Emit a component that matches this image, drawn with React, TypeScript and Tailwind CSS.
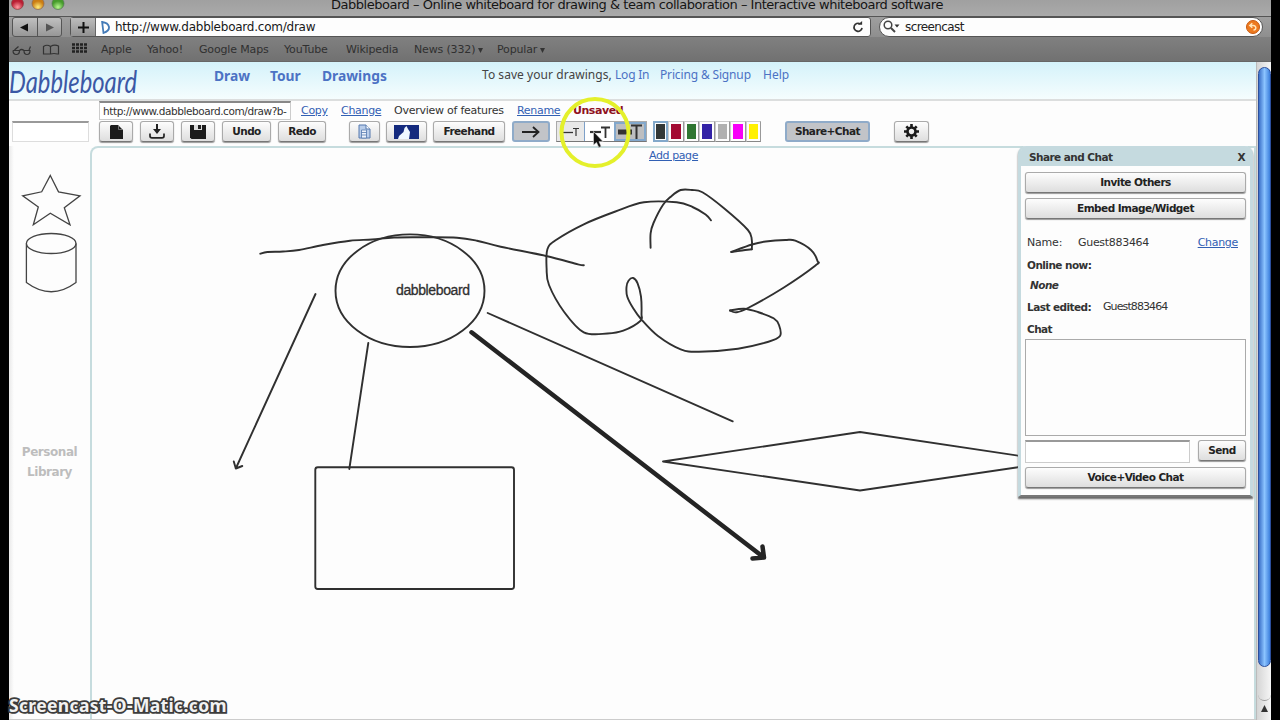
import type { ReactNode } from "react";
import clsx from "clsx";

type Point = [number, number];

// Catmull-Rom through the points, written out as cubic segments
function smooth(points: Point[]) {
    let d = `M${points[0][0]} ${points[0][1]}`;
    for (let i = 0; i < points.length - 1; i++) {
        const p0 = points[i - 1] || points[i];
        const p1 = points[i];
        const p2 = points[i + 1];
        const p3 = points[i + 2] || p2;
        const c1 = [p1[0] + (p2[0] - p0[0]) / 6, p1[1] + (p2[1] - p0[1]) / 6];
        const c2 = [p2[0] - (p3[0] - p1[0]) / 6, p2[1] - (p3[1] - p1[1]) / 6];
        d += `C${c1[0]} ${c1[1]} ${c2[0]} ${c2[1]} ${p2[0]} ${p2[1]}`;
    }
    return d;
}

const strokes: Point[][] = [
    [[260.3, 253.7], [267.4, 252], [283, 251.5], [299, 250], [323, 245], [350, 240.7], [372, 239.5], [394, 237.5], [425, 237.3], [457, 237.7], [477, 240.7], [500.7, 246.7], [546, 256], [578, 264.3], [583.8, 265.3]],
    [[711, 220.3], [705.6, 214.5], [692.5, 207], [676.7, 202.3], [643.9, 202.3], [615.4, 211.5], [583.8, 224.3], [556, 240], [547.4, 249.3], [546.6, 268.3], [549, 285], [564, 311.7], [583.8, 332.3], [607.5, 333.5], [623.3, 330.7], [640.3, 321], [641.5, 314], [641, 296.7], [637.6, 283.3], [633.2, 278], [628.5, 280.7], [626.5, 287], [627.3, 296.7], [633.2, 308.3], [641, 319], [658, 336], [680.7, 349.3], [699, 351.7], [738, 348.7], [767.6, 342], [780, 336], [779, 325], [773.6, 318.3], [757.8, 312], [744, 308.8], [730, 310.5]],
    [[730, 310.5], [736, 312.3], [748, 308], [783.5, 287.7], [815.5, 265.5], [817.5, 261], [811, 250], [795.3, 240.7], [785.4, 240], [765.7, 241.5], [752, 244.5], [731.3, 252]],
    [[731.3, 252], [742, 250.5], [751.8, 249.3]],
    [[751.8, 249.3], [751.8, 240], [747.9, 230], [724, 208.3], [702.4, 192.3], [692, 190], [680.7, 190], [670.8, 196.7], [662.9, 205], [653.5, 223], [650.6, 233.3], [650.6, 247.7]],
];

const bookmarks = [
    { label: "Apple", width: "w-[46px]" },
    { label: "Yahoo!", width: "w-[52px]" },
    { label: "Google Maps", width: "w-[85px]" },
    { label: "YouTube", width: "w-[62px]" },
    { label: "Wikipedia", width: "w-[68px]" },
    { label: "News (332)", width: "w-[83px]", menu: true },
    { label: "Popular", width: "w-[60px]", menu: true },
];

const swatches = ["bg-[#333837]", "bg-[#a30a32]", "bg-[#2f7631]", "bg-[#3322a6]", "bg-[#b0b0b0]", "bg-[#f800f8]", "bg-[#fff000]"];

const boldText = "text-[10.5px] font-bold tracking-[-0.55px]";
const toolButton = "flex h-[21px] shrink-0 items-center justify-center rounded-[3px] border border-[#aaa] border-b-[#777] bg-linear-to-b from-[#fdfdfd] to-[#dedede] text-[10.5px] font-bold tracking-[-0.55px] text-[#222] shadow-[0_1px_1px_#999]";
const activeButton = "flex h-[21px] shrink-0 items-center justify-center rounded-[3px] border-2 border-[#8fabc9] bg-[#c2c4c8] text-[10.5px] font-bold tracking-[-0.55px] text-[#222]";

function Link({ className, children }: { className?: string; children: ReactNode }) {
    return <a className={clsx("shrink-0 text-[#3260b4] underline underline-offset-1", className)}>{children}</a>;
}

function BrowserChrome() {
    return (
        <header className="h-[62px] bg-linear-to-b from-[#adadad] via-[#8e8e8e] via-60% to-[#707070] font-['DejaVu_Sans',sans-serif]">
            <div className="flex h-[17px] items-start border-b border-[#555] bg-linear-to-b from-[#a0a0a0] to-[#aaaaaa]">
                <svg className="h-[12px] w-[70px] shrink-0" viewBox="9 0 70 12">
                    <defs>
                        <radialGradient id="red" cy=".8"><stop stopColor="#ff9aa2" /><stop offset="1" stopColor="#b91e33" /></radialGradient>
                        <radialGradient id="amber" cy=".8"><stop stopColor="#ffed7a" /><stop offset="1" stopColor="#cb7d13" /></radialGradient>
                        <radialGradient id="green" cy=".8"><stop stopColor="#b8f990" /><stop offset="1" stopColor="#469b2c" /></radialGradient>
                    </defs>
                    <circle cx="17.5" cy="3.5" r="6" fill="url(#red)" stroke="#844" strokeWidth=".7" />
                    <circle cx="38" cy="3.5" r="6" fill="url(#amber)" stroke="#865" strokeWidth=".7" />
                    <circle cx="58" cy="3.5" r="6" fill="url(#green)" stroke="#575" strokeWidth=".7" />
                </svg>
                <h1 className="-mt-[4px] ml-[252px] whitespace-nowrap text-[13px] leading-[17px] tracking-[-0.48px] text-[#151515]">
                    Dabbleboard – Online whiteboard for drawing &amp; team collaboration – Interactive whiteboard software
                </h1>
            </div>

            <div className="flex h-[20px] items-stretch pl-[3px]">
                <div className="flex w-[50px] rounded-[3px] border border-[#555] bg-linear-to-b from-[#c0c0c0] to-[#979797]">
                    <span className="flex flex-1 items-center justify-center border-r border-[#555]">
                        <svg className="size-[9px]" viewBox="0 0 9 9"><path d="M0 4.5 8 .5v8z" fill="#111" /></svg>
                    </span>
                    <span className="flex flex-1 items-center justify-center">
                        <svg className="size-[9px]" viewBox="0 0 9 9"><path d="M9 4.5 1 .5v8z" fill="#555" /></svg>
                    </span>
                </div>
                <div className="ml-[8px] flex w-[801px] rounded-[3px] border border-[#555] bg-[#fdfdfd]">
                    <span className="flex w-[25px] items-center justify-center border-r border-[#666] bg-linear-to-b from-[#bdbdbd] to-[#929292]">
                        <svg className="size-[11px]" viewBox="0 0 11 11"><path d="M5.5 0v11M0 5.5h11" stroke="#111" strokeWidth="2" /></svg>
                    </span>
                    <svg className="mt-[3px] ml-[5px] h-[13px] w-[9px]" viewBox="0 0 9 13">
                        <path d="M1 0 2.5 12C11 9 9 2 1 1" fill="#fff" stroke="#447bb8" strokeWidth="1.8" />
                    </svg>
                    <span className="ml-[5px] text-[12px] leading-[19px] tracking-[-0.24px] text-[#181818]">http://www.dabbleboard.com/draw</span>
                    <svg className="mt-[3px] mr-[6px] ml-auto size-[12px]" viewBox="0 0 12 12" fill="none" stroke="#333" strokeWidth="1.7">
                        <path d="M8 2.8A4 4 0 1 0 10 6.8" />
                        <path d="M5.8 3.7h4.3V0z" fill="#333" stroke="none" />
                    </svg>
                </div>
                <div className="ml-[8px] flex w-[384px] items-center rounded-full border border-[#555] bg-[#fdfdfd]">
                    <svg className="ml-[3px] h-[14px] w-[17px]" viewBox="0 0 17 14" fill="none" stroke="#444" strokeWidth="1.5">
                        <circle cx="5" cy="5" r="3.8" />
                        <path d="m8 8 4 4" strokeWidth="2" />
                        <path d="M11.5 4.5h5l-2.5 3z" fill="#333" stroke="none" />
                    </svg>
                    <span className="ml-[5px] text-[12px] leading-[18px] tracking-[-0.6px] text-[#222]">screencast</span>
                    <svg className="mr-[2px] ml-auto size-[14px]" viewBox="0 0 14 14">
                        <circle cx="7" cy="7" r="6.5" fill="#ed7a20" stroke="#c65a10" />
                        <path d="M4.5 5.5h3a2.3 2.3 0 0 1 0 4.6M6.3 3.2 3.8 5.5l2.5 2.3" fill="none" stroke="#ffe6bb" strokeWidth="1.5" />
                    </svg>
                </div>
            </div>

            <nav className="flex h-[25px] items-center border-b border-[#666] bg-linear-to-b from-[#808080] to-[#717171] pt-[2px] pl-[3px] text-[11px] text-[#303030]">
                <svg className="h-[14px] w-[89px] shrink-0" viewBox="12 43 89 14" fill="none" stroke="#333" strokeWidth="1.2">
                    <path d="M13 50.5h6.500q0 4-3.200 4t-3.300-4M24 50.500h6q0 4-3 4t-3-4M19.500 50.500q2-2 4.500 0M14.500 50l4-3.500M29 50l1.500-3.500" />
                    <path d="M50.5 46.500q-3.500-2.500-7 0V54h7q3.500-1 7 0h1v-8q-4-2-8 .5V54" />
                    <path d="M72 44.500h15M72 48h15M72 51.500h15" strokeWidth="2.6" strokeDasharray="3 1" stroke="#222" />
                </svg>
                {bookmarks.map((item) => (
                    <span key={item.label} className={clsx("flex shrink-0 items-center whitespace-nowrap tracking-[-0.15px]", item.width)}>
                        {item.label}
                        {item.menu && <svg className="ml-[3px] size-[5px]" viewBox="0 0 5 5"><path d="M0 0h5L2.5 5z" fill="#333" /></svg>}
                    </span>
                ))}
            </nav>
        </header>
    );
}

function SiteHeader() {
    return (
        <div className="flex h-[39px] border-b-2 border-[#dcdede] bg-linear-to-b from-[#d4f2fa] to-[#f5fdfe] whitespace-nowrap">
            <svg className="h-[37px] w-[130px] shrink-0" viewBox="9 62 130 37">
                <text x="9" y="93" textLength="128" lengthAdjust="spacingAndGlyphs" fill="#3b58a5" fontFamily="Lato, sans-serif" fontStyle="italic" fontSize="30">
                    Dabbleboard
                </text>
            </svg>
            <div className="ml-[75px] flex font-['Noto_Sans',sans-serif] text-[13.8px] leading-[28px] font-bold text-[#4c72c4]">
                <span className="w-[56px]">Draw</span>
                <span className="w-[52px]">Tour</span>
                <span className="w-[160px]">Drawings</span>
            </div>
            <div className="flex font-['Noto_Sans',sans-serif] text-[12px] leading-[25px] text-[#4c72c4]">
                <span className="w-[133px] tracking-[0.05px] text-[#444]">To save your drawings,</span>
                <span className="w-[45px] tracking-[-0.2px]">Log In</span>
                <span className="w-[103px] tracking-[-0.15px]">Pricing &amp; Signup</span>
                <span>Help</span>
            </div>
        </div>
    );
}

function Toolbar() {
    return (
        <div className="h-[45px] font-['DejaVu_Sans',sans-serif] text-[11px] whitespace-nowrap">
            <div className="flex h-[19px] pl-[90px] leading-[19px] text-[#333]">
                <div className="h-[19px] w-[192px] shrink-0 border border-t-2 border-[#ccc] border-t-[#888] bg-white pl-[3px] text-[10.5px] leading-[17px] tracking-[-0.42px]">
                    http://www.dabbleboard.com/draw?b-
                </div>
                <Link className="ml-[10px] w-[40px] tracking-[-0.3px]">Copy</Link>
                <Link className="w-[53px] tracking-[-0.3px]">Change</Link>
                <span className="w-[123px] tracking-[-0.25px]">Overview of features</span>
                <Link className="w-[56px] tracking-[-0.3px]">Rename</Link>
                <span className="font-bold tracking-[-0.45px] text-[#8f1020]">Unsaved</span>
            </div>

            <div className="flex h-[26px] items-start pt-px pl-[3px]">
                <div className="h-[21px] w-[77px] shrink-0 border border-t-2 border-[#ddd] border-t-[#999] bg-white" />
                <button className={clsx(toolButton, "ml-[10px] w-[34px]")}>
                    <svg className="h-[14px] w-[13px]" viewBox="0 0 13 14">
                        <path d="M1 0h7l5 5v9H0V1z" fill="#1c1c1c" />
                        <path d="M8.5 0v4.5H13" fill="none" stroke="#888" strokeWidth=".8" />
                    </svg>
                </button>
                <button className={clsx(toolButton, "ml-[7px] w-[34px]")}>
                    <svg className="h-[15px] w-[16px]" viewBox="0 0 16 15">
                        <path d="M7 0h2v5h3L8 10 4 5h3z" fill="#222" />
                        <path d="M1 9.500V12q0 1.800 2 1.800h10q2 0 2-1.800V9.500" fill="none" stroke="#222" strokeWidth="1.7" />
                    </svg>
                </button>
                <button className={clsx(toolButton, "ml-[7px] w-[34px]")}>
                    <svg className="h-[14px] w-[16px]" viewBox="0 0 16 14">
                        <path d="M0 0h16v14H1.5L0 12.500z" fill="#1c1c1c" />
                        <path d="M4 0h8v5H4z" fill="#ddd" />
                        <path d="M8 0h3v4H8z" fill="#222" />
                    </svg>
                </button>
                <button className={clsx(toolButton, "ml-[7px] w-[49px]")}>Undo</button>
                <button className={clsx(toolButton, "ml-[7px] w-[48px]")}>Redo</button>
                <button className={clsx(toolButton, "ml-[23px] w-[31px]")}>
                    <svg className="h-[15px] w-[13px]" viewBox="0 0 13 15" stroke="#5478ae">
                        <path d="M1 1h7l4 4v9H1z" fill="#b9cdea" />
                        <path d="M8 1v4h4" fill="#fff" />
                        <path d="M3.5 6h5v8h-5zM3.5 8.500h5M3.5 11h5" fill="#eef3fb" strokeWidth=".8" />
                    </svg>
                </button>
                <button className={clsx(toolButton, "ml-[6px] w-[41px]")}>
                    <svg className="h-[14px] w-[25px]" viewBox="0 0 25 14">
                        <path d="M0 0h25v14H0z" fill="#142a7e" />
                        <path d="m12.500 1-2 2-1 4-4.500 4-1 3h11l1-7-2-3z" fill="#eef7ff" />
                    </svg>
                </button>
                <button className={clsx(toolButton, "ml-[6px] w-[72px]")}>Freehand</button>
                <button className={clsx(activeButton, "ml-[7px] w-[38px]")}>
                    <svg className="h-[12px] w-[18px]" viewBox="0 0 18 12" fill="none" stroke="#222" strokeWidth="1.8"><path d="M0 6h17M11 1l5.500 5L11 11" /></svg>
                </button>
                <div className="ml-[6px] flex h-[21px] w-[91px] shrink-0 border border-[#aaa] border-b-[#777]">
                    <span className="flex w-[28px] items-center justify-center border-r border-[#7da0c8] bg-[#e8e8e8]">
                        <svg className="h-[9px] w-[18px]" viewBox="0 0 18 9" fill="none" stroke="#333">
                            <path d="M0 5.500h11" strokeWidth="1.3" />
                            <path d="M11 1.500h6M14 1.500V9" strokeWidth="1.2" />
                        </svg>
                    </span>
                    <span className="flex w-[29px] items-center justify-center bg-white">
                        <svg className="h-[12px] w-[20px]" viewBox="0 0 20 12" fill="none" stroke="#333">
                            <path d="M0 6h11" strokeWidth="2.2" />
                            <path d="M11 1.500h9M15.500 1.500V12" strokeWidth="1.8" />
                        </svg>
                    </span>
                    <span className="flex flex-1 items-center justify-center border-2 border-[#83a8cc] bg-[#bdbec0]">
                        <svg className="h-[15px] w-[24px]" viewBox="0 0 24 15" fill="none" stroke="#333">
                            <path d="M0 8h14" strokeWidth="5" />
                            <path d="M13 1.500h11M18.500 1.500V15" strokeWidth="2" />
                        </svg>
                    </span>
                </div>
                <div className="ml-[6px] flex h-[21px] shrink-0">
                    {swatches.map((color, i) => (
                        <span key={color} className={clsx("w-[15.43px] border p-[2px]", i === 0 ? "border-2 border-[#82a8ca] p-px" : "border-[#ccc] border-r-[#999] border-b-[#888]")}>
                            <span className={clsx("block h-full", color)} />
                        </span>
                    ))}
                </div>
                <button className={clsx(activeButton, "ml-[24px] w-[85px]")}>Share+Chat</button>
                <button className={clsx(toolButton, "ml-[24px] w-[35px]")}>
                    <svg className="size-[15px]" viewBox="-7.5 -7.5 15 15" fill="none" stroke="#1a1a1a" strokeWidth="2.6">
                        <circle r="4" />
                        <path d="M0-4.500v-3M0 4.500v3M-4.500 0h-3M4.500 0h3M3.200-3.200l2-2M-3.200 3.200l-2 2M-3.200-3.200l-2-2M3.200 3.200l2 2" />
                    </svg>
                </button>
            </div>
        </div>
    );
}

function ShapeLibrary() {
    return (
        <aside className="w-[81px] shrink-0 bg-linear-to-r from-[#e9e9e9] to-[#fdfdfd] to-6% font-['DejaVu_Sans',sans-serif]">
            <svg className="h-[154px] w-[81px]" viewBox="9 146 81 154" fill="none" stroke="#444" strokeWidth="1.3">
                <path d="m50.300 175.500 8.200 16.300 21.500 4-15.700 12 5.700 17-19.700-11.500-17 11.500 5-17.800-15.600-11.200 19-4z" />
                <ellipse cx="51.2" cy="243.5" rx="24.8" ry="10" />
                <path d="M26.400 243.500v39q24.800 18.500 49.600 0v-39" />
            </svg>
            <p className="mt-[142px] text-center text-[12px] leading-[20px] font-bold tracking-[-0.45px] text-[#bdbdbd]">
                Personal<br />Library
            </p>
        </aside>
    );
}

function SharePanel() {
    return (
        <section className="absolute -top-[2px] right-px h-[351px] w-[235px] rounded-t-[8px] border-x-[3px] border-b-2 border-[#c5dadf] border-b-[#777] bg-[#fdfdfd] text-[11px] text-[#333] shadow-[0_2px_2px_#666]">
            <div className={clsx("flex h-[20px] items-center justify-between rounded-t-[5px] bg-[#c5dadf] pt-[4px] pr-[5px] pl-[8px]", boldText)}>
                <span>Share and Chat</span>
                <span>X</span>
            </div>
            <div className="flex flex-col px-[4px] pt-[6px]">
                <button className={toolButton}>Invite Others</button>
                <button className={clsx(toolButton, "mt-[5px]")}>Embed Image/Widget</button>
                <div className="mt-[14px] flex h-[20px] items-center pr-[8px] pl-[2px]">
                    <span className="w-[51px] tracking-[-0.2px]">Name:</span>
                    <span className="tracking-[-0.3px]">Guest883464</span>
                    <Link className="ml-auto tracking-[-0.3px]">Change</Link>
                </div>
                <div className={clsx("mt-[2px] pl-[2px] leading-[20px]", boldText)}>Online now:</div>
                <div className={clsx("pl-[5px] leading-[20px] italic", boldText)}>None</div>
                <div className="mt-[2px] flex pl-[2px] leading-[20px]">
                    <span className={clsx("w-[76px]", boldText)}>Last edited:</span>
                    <span className="tracking-[-0.9px]">Guest883464</span>
                </div>
                <div className={clsx("mt-[2px] pl-[2px] leading-[20px]", boldText)}>Chat</div>
                <div className="h-[97px] border border-[#aaa] bg-[#fdfdfd]" />
                <div className="mt-[4px] flex h-[23px] justify-between">
                    <div className="h-[23px] w-[165px] border border-t-2 border-[#ccc] border-t-[#999] bg-white" />
                    <button className={clsx(toolButton, "w-[48px]")}>Send</button>
                </div>
                <button className={clsx(toolButton, "mt-[4px]")}>Voice+Video Chat</button>
            </div>
        </section>
    );
}

function Whiteboard() {
    return (
        <main className="relative h-[573px] w-[1166px] shrink-0 rounded-tl-[8px] border-2 border-b-0 border-[#c6dcde] bg-[#fdfdfd] font-['DejaVu_Sans',sans-serif]">
            <svg className="h-[571px] w-[1162px]" viewBox="92 148 1162 571" fill="none" stroke="#303030" strokeWidth="1.9" strokeLinecap="round" strokeLinejoin="round">
                {strokes.map((points, i) => (
                    <path key={i} d={smooth(points)} />
                ))}
                <ellipse cx="410" cy="290.7" rx="74.5" ry="56.3" />
                <text x="396" y="295" textLength="74" fill="#303030" stroke="#303030" strokeWidth=".3" fontFamily="Liberation Sans, sans-serif" fontSize="14">dabbleboard</text>
                <path d="M315.500 294 235.800 468.500M233.800 461.500l2 7 6.500-2.500M368.300 343l-19 126M487.700 313l245 108.300" />
                <path d="m471.500 332.300 292 225M762.500 546.500l1.500 11-11.500 1" strokeWidth="4.5" stroke="#242424" />
                <rect x="315.3" y="467.3" width="198.7" height="121.7" rx="2.5" />
                <path d="M663 461.500 860 432l197 29.500L860 490.500z" />
            </svg>
            <Link className="absolute top-0 left-[557px] text-[11px] leading-[15px] tracking-[-0.4px]">Add page</Link>
            <SharePanel />
        </main>
    );
}

function Scrollbar() {
    return (
        <div className="flex h-[658px] w-[15px] shrink-0 flex-col items-center border-l border-[#bbb] bg-linear-to-r from-[#d5d5d5] to-[#f6f6f6] pt-[5px]">
            <div className="h-[600px] w-[13px] rounded-full border border-[#2c4f9c] bg-linear-to-r from-[#3c70c8] via-[#8cc4ff] to-[#3c7fdc]" />
            <div className="h-[34px] w-[13px] rounded-b-full border-b border-[#999]" />
            <svg className="mt-[4px] size-[7px]" viewBox="0 0 7 7"><path d="M3.5 0 7 7H0z" fill="#333" /></svg>
        </div>
    );
}

export default function App() {
    return (
        <div className="relative h-[720px] w-[1280px] overflow-hidden bg-black px-[9px]">
            <BrowserChrome />
            <div className="flex">
                <div className="w-[1247px] shrink-0 border-b border-[#ccc] bg-[#fdfdfd]">
                    <SiteHeader />
                    <Toolbar />
                    <div className="flex">
                        <ShapeLibrary />
                        <Whiteboard />
                    </div>
                </div>
                <Scrollbar />
            </div>

            {/* Pointer with click highlight */}
            <svg className="absolute top-[94px] left-[556px] h-[78px] w-[78px]" viewBox="556 94 78 78">
                <circle cx="595" cy="132.5" r="33.5" fill="none" stroke="#e4f02b" strokeWidth="4" />
                <path d="M593.500 131.500v13.500l3-2.600 2.300 5 2.400-1-2.200-4.800h4z" fill="#111" stroke="#ddd" strokeWidth=".6" />
            </svg>
            <div className="absolute top-[693px] left-[9px] font-['Noto_Sans',sans-serif] text-[17.5px] leading-[24px] font-bold tracking-[0.35px] text-[#f2f2f2] [-webkit-text-stroke:3.5px_#3c3c3c] [paint-order:stroke]">
                Screencast-O-Matic.com
            </div>
        </div>
    );
}
